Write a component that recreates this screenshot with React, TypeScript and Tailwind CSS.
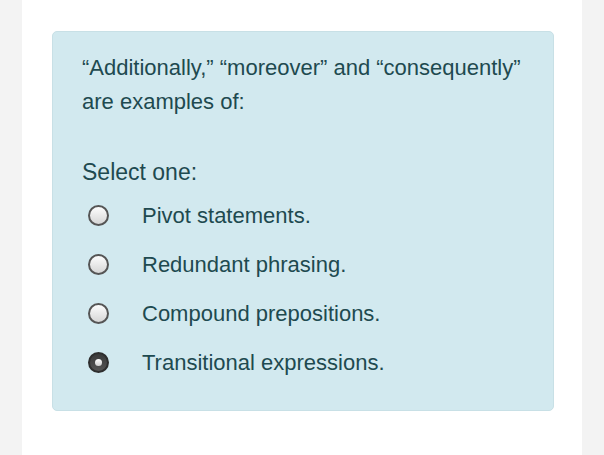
const options = [
  { label: "Pivot statements.", checked: false },
  { label: "Redundant phrasing.", checked: false },
  { label: "Compound prepositions.", checked: false },
  { label: "Transitional expressions.", checked: true },
];

function Radio({ checked }: { checked: boolean }) {
  if (checked) {
    return (
      <span className="flex h-[21px] w-[21px] items-center justify-center rounded-full border-2 border-[#2e2e2e] bg-gradient-to-b from-[#3a3a3a] to-[#555]">
        <span className="h-[7px] w-[7px] rounded-full bg-gradient-to-b from-[#fff] to-[#cfcfcf]" />
      </span>
    );
  }
  return (
    <span className="h-[21px] w-[21px] rounded-full border-2 border-[#555] bg-gradient-to-b from-[#fdfdfd] to-[#d6d6d6]" />
  );
}

export default function App() {
  return (
    <div className="flex h-[455px] w-[604px] justify-center bg-[#f3f3f3] font-['Liberation_Sans',Arial,sans-serif]">
      <div className="w-[560px] bg-white pt-[31px] pl-[30px]">
        <div className="h-[380px] w-[502px] rounded-[5px] border border-[#c8e0e6] bg-[#d2e9ef] px-[29px] pt-[19px] text-[22px] text-[#1e4a50]">
          <p className="leading-[34px]">
            “Additionally,” “moreover” and “consequently” are examples of:
          </p>
          <p className="mt-[36px] text-[23px] leading-[35px]">Select one:</p>
          <div className="mt-[1px] flex flex-col">
            {options.map((o) => (
              <label key={o.label} className="flex h-[49px] items-center">
                <span className="ml-[6px] flex w-[54px]">
                  <Radio checked={o.checked} />
                </span>
                <span>{o.label}</span>
              </label>
            ))}
          </div>
        </div>
      </div>
    </div>
  );
}
